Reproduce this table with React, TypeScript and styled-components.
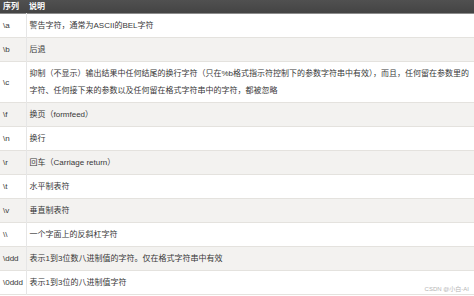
import React from 'react'
import styled, { createGlobalStyle } from 'styled-components'

const GlobalStyle = createGlobalStyle`
  html, body {
    margin: 0;
    padding: 0;
    background: #ffffff;
  }
  body {
    font-family: "Liberation Sans", "Noto Sans CJK SC", sans-serif;
  }
`

const Page = styled.div`
  position: relative;
  width: 474px;
  height: 296px;
  overflow: hidden;
  background: #ffffff;
`

const Table = styled.table`
  width: 100%;
  border-collapse: collapse;
  table-layout: fixed;
  font-size: 8px;
  color: #383838;
`

const HeadRow = styled.tr`
  background: linear-gradient(#505050, #444444);
  border-bottom: 1px solid #8c8c8c;
`

const HeadCell = styled.th<{ $w?: number }>`
  width: ${p => (p.$w ? `${p.$w}px` : 'auto')};
  height: 13px;
  padding: 0 3px;
  text-align: left;
  font-weight: bold;
  color: #ffffff;
  line-height: 13px;
`

const Row = styled.tr<{ $alt: boolean }>`
  background: ${p => (p.$alt ? '#f3f2f0' : '#ffffff')};
  border-bottom: 1px solid #e4e2de;
`

const CodeCell = styled.td`
  padding: 3px 3px;
  line-height: 17px;
  vertical-align: middle;
  border-right: 1px solid #e6e6e6;
  white-space: nowrap;
`

const DescCell = styled.td`
  padding: 3px 2px 3px 3px;
  line-height: 17px;
  vertical-align: middle;
  white-space: nowrap;
`

const Mark = styled.div`
  position: absolute;
  right: 5px;
  bottom: 3px;
  font-size: 6px;
  color: #b4b4b4;
  font-family: "Liberation Sans", "Noto Sans CJK SC", sans-serif;
`

const rows: { code: string; desc: React.ReactNode }[] = [
  { code: '\\a', desc: '警告字符，通常为ASCII的BEL字符' },
  { code: '\\b', desc: '后退' },
  {
    code: '\\c',
    desc: (
      <>
        抑制（不显示）输出结果中任何结尾的换行字符（只在%b格式指示符控制下的参数字符串中有效），而且，任何留在参数里的
        <br />
        字符、任何接下来的参数以及任何留在格式字符串中的字符，都被忽略
      </>
    ),
  },
  { code: '\\f', desc: '换页（formfeed）' },
  { code: '\\n', desc: '换行' },
  { code: '\\r', desc: '回车（Carriage return）' },
  { code: '\\t', desc: '水平制表符' },
  { code: '\\v', desc: '垂直制表符' },
  { code: '\\\\', desc: '一个字面上的反斜杠字符' },
  { code: '\\ddd', desc: '表示1到3位数八进制值的字符。仅在格式字符串中有效' },
  { code: '\\0ddd', desc: '表示1到3位的八进制值字符' },
]

export default function App() {
  return (
    <Page>
      <GlobalStyle />
      <Table>
        <thead>
          <HeadRow>
            <HeadCell $w={20}>序列</HeadCell>
            <HeadCell>说明</HeadCell>
          </HeadRow>
        </thead>
        <tbody>
          {rows.map((r, i) => (
            <Row key={r.code} $alt={i % 2 === 1}>
              <CodeCell>{r.code}</CodeCell>
              <DescCell>{r.desc}</DescCell>
            </Row>
          ))}
        </tbody>
      </Table>
      <Mark>CSDN @小白-AI</Mark>
    </Page>
  )
}
